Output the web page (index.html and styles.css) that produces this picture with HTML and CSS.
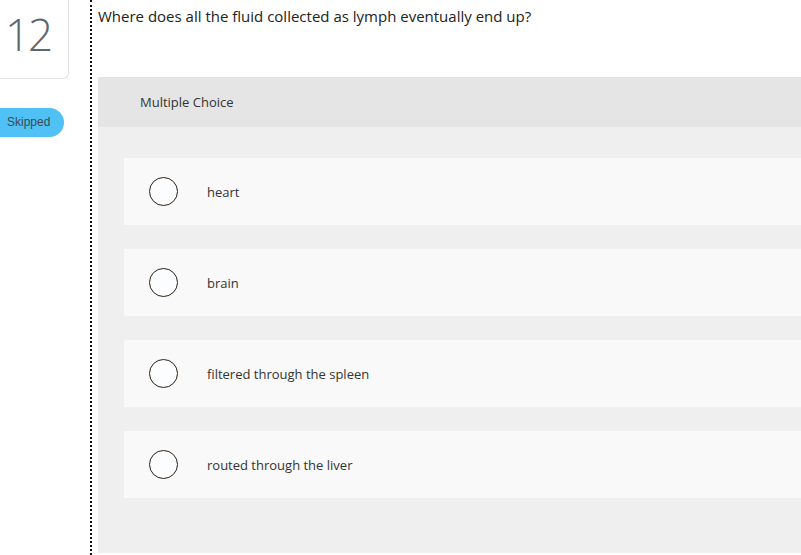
FILE: index.html
```html
<!DOCTYPE html>
<html>
<head>
<meta charset="utf-8">
<link rel="stylesheet" href="styles.css">
</head>
<body>
<div class="page">
  <aside class="side">
    <div class="num-card"><span class="num">12</span></div>
    <div class="pill">Skipped</div>
  </aside>
  <main class="main">
    <p class="question">Where does all the fluid collected as lymph eventually end up?</p>
    <section class="panel">
      <div class="panel-head">Multiple Choice</div>
      <div class="panel-body">
        <div class="option"><span class="radio"></span><span class="label">heart</span></div>
        <div class="option"><span class="radio"></span><span class="label">brain</span></div>
        <div class="option"><span class="radio"></span><span class="label">filtered through the spleen</span></div>
        <div class="option"><span class="radio"></span><span class="label">routed through the liver</span></div>
      </div>
    </section>
  </main>
</div>
</body>
</html>
```
FILE: styles.css
```css
html, body {
  margin: 0;
  padding: 0;
  background: #fff;
  overflow: hidden;
}
body {
  font-family: "Open Sans", "Liberation Sans", Arial, sans-serif;
  color: #222;
  width: 801px;
  height: 555px;
}
.page {
  display: flex;
  height: 555px;
}
.side {
  width: 90px;
  flex: none;
  display: flex;
  flex-direction: column;
}
.num-card {
  width: 69px;
  height: 79px;
  box-sizing: border-box;
  border-right: 1px solid #e2e2e2;
  border-bottom: 1px solid #e2e2e2;
  border-bottom-right-radius: 6px;
  padding-top: 11px;
  padding-left: 5px;
}
.num {
  font-family: "Open Sans", sans-serif;
  font-weight: 300;
  font-size: 44px;
  line-height: 46px;
  color: #5f6670;
  letter-spacing: -2px;
}
.pill {
  margin-top: 29px;
  width: 64px;
  height: 29px;
  box-sizing: border-box;
  background: #4fc1f4;
  border-radius: 0 15px 15px 0;
  font-family: "Liberation Sans", Arial, sans-serif;
  font-size: 12px;
  line-height: 29px;
  color: #3d4852;
  padding-left: 7px;
}
.main {
  flex: 1;
  border-left: 2px dotted #111;
  padding-left: 6px;
  min-width: 0;
  display: flex;
  flex-direction: column;
}
.question {
  margin: 6px 0 0 0;
  font-size: 15px;
  line-height: 20px;
  color: #222;
  height: 71px;
  flex: none;
}
.panel {
  width: 720px;
  height: 476px;
  background: #efefef;
  display: flex;
  flex-direction: column;
  flex: none;
}
.panel-head {
  height: 50px;
  background: #e5e5e5;
  padding-left: 42px;
  font-size: 13px;
  line-height: 50px;
  color: #333;
}
.panel-body {
  padding: 31px 0 0 26px;
  display: flex;
  flex-direction: column;
  gap: 24px;
}
.option {
  height: 67px;
  background: #f9f9f9;
  display: flex;
  align-items: center;
  padding-left: 25px;
}
.radio {
  width: 27px;
  height: 27px;
  border: 1px solid #2a1e12;
  border-radius: 50%;
  background: #fcfdff;
  flex: none;
}
.label {
  margin-left: 29px;
  font-size: 13px;
  color: #333;
}
```
